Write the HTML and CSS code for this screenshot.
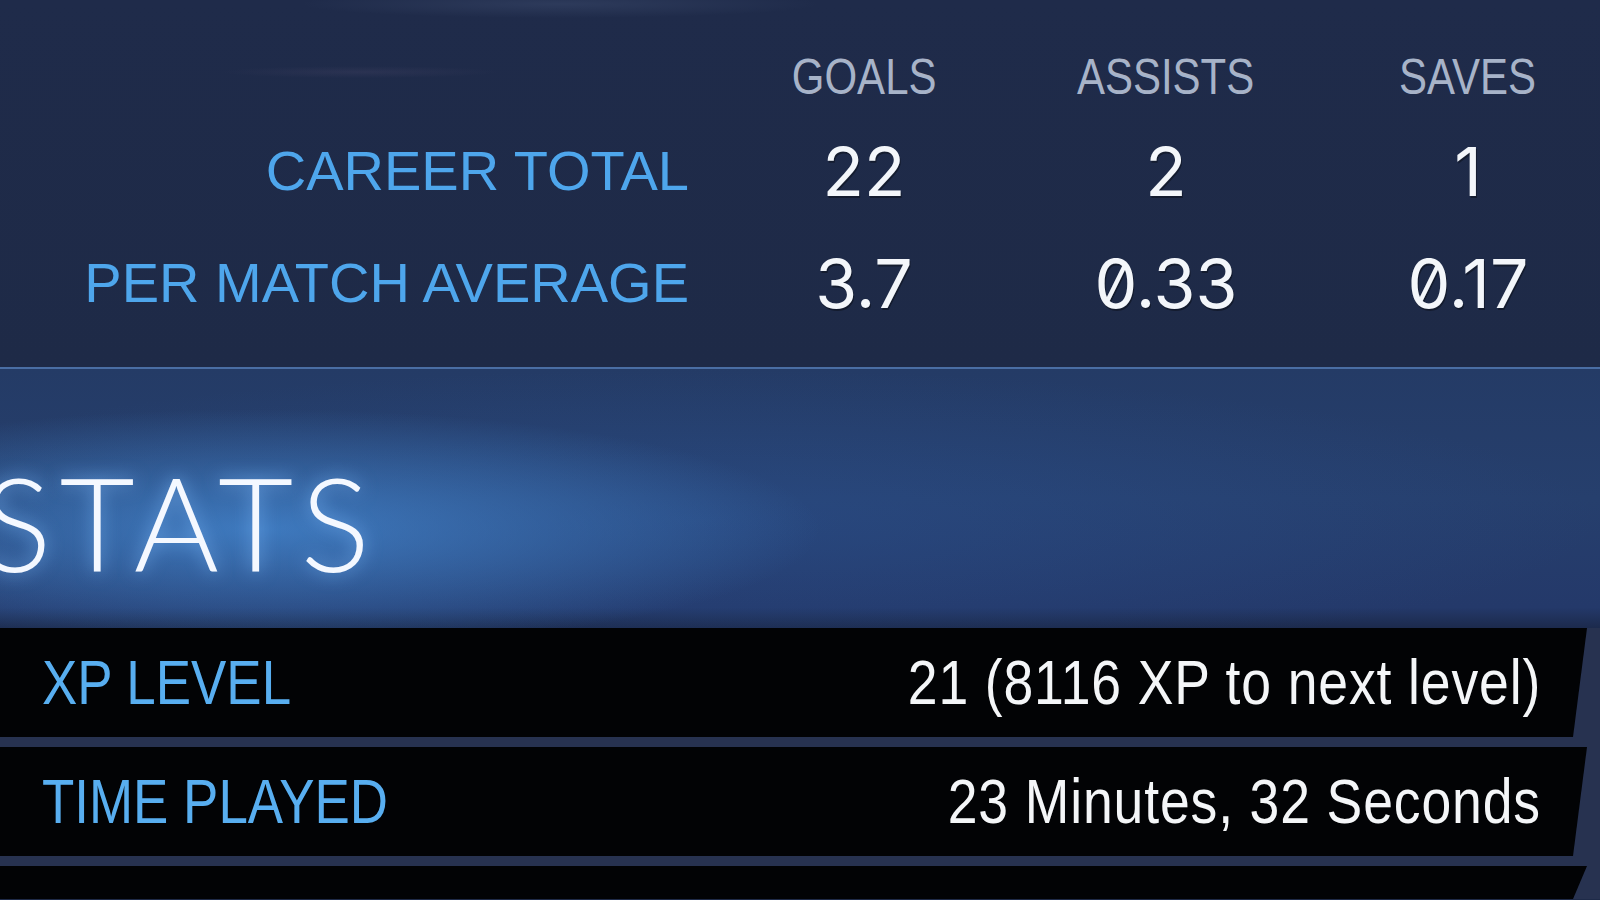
FILE: index.html
```html
<!DOCTYPE html>
<html lang="en">
<head>
  <meta charset="UTF-8">
  <title>Stats</title>
  <link rel="stylesheet" href="styles.css">
</head>
<body>

<section class="career">
  <div class="col-head"></div>
  <div class="col-head"><span>GOALS</span></div>
  <div class="col-head"><span>ASSISTS</span></div>
  <div class="col-head"><span>SAVES</span></div>

  <div class="row-label">CAREER TOTAL</div>
  <div class="num">22</div>
  <div class="num">2</div>
  <div class="num">1</div>

  <div class="row-label">PER MATCH AVERAGE</div>
  <div class="num">3.7</div>
  <div class="num">0.33</div>
  <div class="num">0.17</div>
</section>

<section class="stats-band">
  <h1 class="stats-title">STATS</h1>
</section>

<section class="stat-list">
  <div class="stat-row">
    <span class="stat-name">XP LEVEL</span>
    <span class="stat-value">21 (8116 XP to next level)</span>
  </div>
  <div class="stat-row">
    <span class="stat-name">TIME PLAYED</span>
    <span class="stat-value">23 Minutes, 32 Seconds</span>
  </div>
  <div class="stat-row">
    <span class="stat-name"></span>
    <span class="stat-value"></span>
  </div>
</section>

</body>
</html>
```

FILE: styles.css
```css
body {
  margin: 0;
  width: 1600px;
  height: 900px;
  overflow: hidden;
  background: #1e2a48;
  font-family: 'Liberation Sans', Arial, sans-serif;
}

/* top table */
.career {
  display: grid;
  grid-template-columns: 713px repeat(3, 302px);
  grid-template-rows: 84px 112px 112px;
  padding-top: 52px;
  height: 315px;
  background:
    radial-gradient(ellipse 260px 14px at 560px 4px, rgba(120, 140, 180, 0.16), transparent),
    radial-gradient(ellipse 140px 6px at 360px 72px, rgba(150, 120, 160, 0.1), transparent),
    linear-gradient(180deg, #1f2b4a 0%, #1e2a47 100%);
}

.col-head {
  font-size: 50px;
  line-height: 50px;
  color: #a7b3c8;
  text-align: center;
}

/* no narrow face installed, so squeeze it */
.col-head span {
  display: inline-block;
  transform: scaleX(0.84);
}

.row-label {
  font-size: 56px;
  line-height: 70px;
  color: #4ea6ec;
  text-align: right;
  padding-right: 24px;
}

.num {
  font-family: Inter, 'Liberation Sans', sans-serif;
  font-feature-settings: "zero";
  font-size: 68px;
  line-height: 70px;
  color: #f3f6fa;
  text-align: center;
  text-shadow: 1px 2px 0 rgba(0, 0, 0, 0.35);
}

/* blue header band */
.stats-band {
  border-top: 2px solid #4a6ea4;
  box-sizing: border-box;
  height: 261px;
  padding-top: 89px;
  background:
    radial-gradient(ellipse 560px 120px at 260px 160px, rgba(70, 140, 215, 0.75), transparent),
    radial-gradient(ellipse 900px 150px at 700px 150px, rgba(45, 90, 160, 0.35), transparent),
    linear-gradient(180deg, #243b66 0%, #263f6d 50%, #24396a 92%, #1c2a4c 100%);
}

.stats-title {
  margin: 0 0 0 -18px;
  font-family: Lato, 'Open Sans', sans-serif;
  font-weight: 300;
  font-size: 130px;
  line-height: 128px;
  letter-spacing: 8px;
  color: #f4f8ff;
  text-shadow: 0 0 18px rgba(130, 190, 255, 0.7);
}

/* black rows */
.stat-list {
  display: flex;
  flex-direction: column;
  gap: 10px;
  background: #273250;
  height: 271px;
}

.stat-row {
  display: flex;
  justify-content: space-between;
  height: 109px;
  padding: 0 59px 0 42px;
  background: #020305;
  clip-path: polygon(0 0, 1587px 0, 1573px 100%, 0 100%);
  font-size: 63px;
  line-height: 109px;
}

.stat-name {
  display: inline-block;
  color: #58aef0;
  transform: scaleX(0.84);
  transform-origin: left center;
}

.stat-value {
  display: inline-block;
  color: #f4f6f8;
  letter-spacing: 1px;
  transform: scaleX(0.85);
  transform-origin: right center;
}
```
